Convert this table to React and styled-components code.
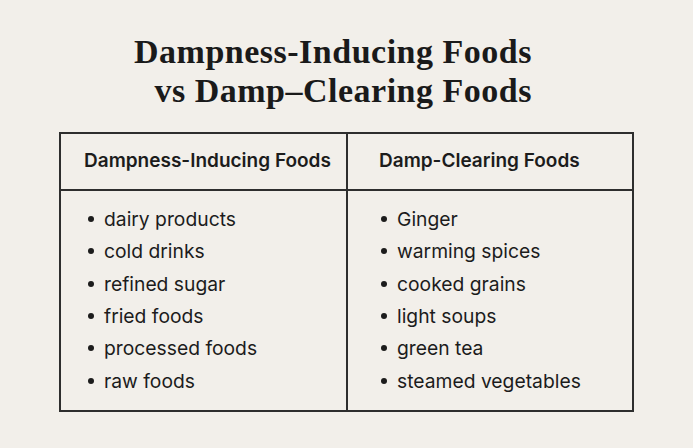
import React from "react";
import styled, { createGlobalStyle } from "styled-components";

const GlobalStyle = createGlobalStyle`
  html, body {
    margin: 0;
    padding: 0;
    background: #f2efea;
  }
`;

const inducing = [
  "dairy products",
  "cold drinks",
  "refined sugar",
  "fried foods",
  "processed foods",
  "raw foods",
];

const clearing = [
  "Ginger",
  "warming spices",
  "cooked grains",
  "light soups",
  "green tea",
  "steamed vegetables",
];

const App = () => {
  return (
    <>
      <GlobalStyle />
      <Page>
        <Title>
          Dampness-Inducing Foods
          <br />
          vs Damp–Clearing Foods
        </Title>
        <Table>
          <HeadCell $pad={23}>Dampness-Inducing Foods</HeadCell>
          <HeadCell $pad={31} $last>Damp-Clearing Foods</HeadCell>
          <BodyCell $pad={27}>
            <List>
              {inducing.map((item) => (
                <Item key={item}>{item}</Item>
              ))}
            </List>
          </BodyCell>
          <BodyCell $pad={33} $last>
            <List>
              {clearing.map((item) => (
                <Item key={item}>{item}</Item>
              ))}
            </List>
          </BodyCell>
        </Table>
      </Page>
    </>
  );
};

const Page = styled.div`
  width: 693px;
  height: 448px;
  background: #f2efea;
  color: #1c1c1c;
  display: flex;
  flex-direction: column;
  align-items: center;
  padding-top: 32px;
  box-sizing: border-box;
`;

const Title = styled.h1`
  margin: 0 27px 0 0;
  font-family: "Liberation Serif", "Times New Roman", serif;
  font-weight: 700;
  font-size: 34px;
  line-height: 39px;
  text-align: right;
  letter-spacing: 0.5px;
  color: #1a1a1a;
`;

const Table = styled.div`
  margin-top: 22px;
  width: 575px;
  display: grid;
  grid-template-columns: 287px 1fr;
  grid-template-rows: 57px 219px;
  border: 2px solid #2e2e2e;
  box-sizing: border-box;
`;

const HeadCell = styled.div`
  display: flex;
  align-items: center;
  padding-left: ${(p) => p.$pad}px;
  padding-bottom: 2px;
  font-family: Inter, "Liberation Sans", Arial, sans-serif;
  font-weight: 600;
  font-size: 19px;
  color: #1c1c1c;
  border-bottom: 2px solid #2e2e2e;
  border-right: ${(p) => (p.$last ? "none" : "2px solid #2e2e2e")};
`;

const BodyCell = styled.div`
  padding: 12px 0 0 ${(p) => p.$pad}px;
  border-right: ${(p) => (p.$last ? "none" : "2px solid #2e2e2e")};
`;

const List = styled.ul`
  margin: 0;
  padding: 0;
  list-style: none;
`;

const Item = styled.li`
  display: flex;
  align-items: center;
  gap: 10px;
  height: 32.3px;
  font-family: Inter, "Liberation Sans", Arial, sans-serif;
  font-size: 19.3px;
  color: #1c1c1c;

  &::before {
    content: "";
    width: 6px;
    height: 6px;
    border-radius: 50%;
    background: #1c1c1c;
    flex: none;
  }
`;

export default App;
